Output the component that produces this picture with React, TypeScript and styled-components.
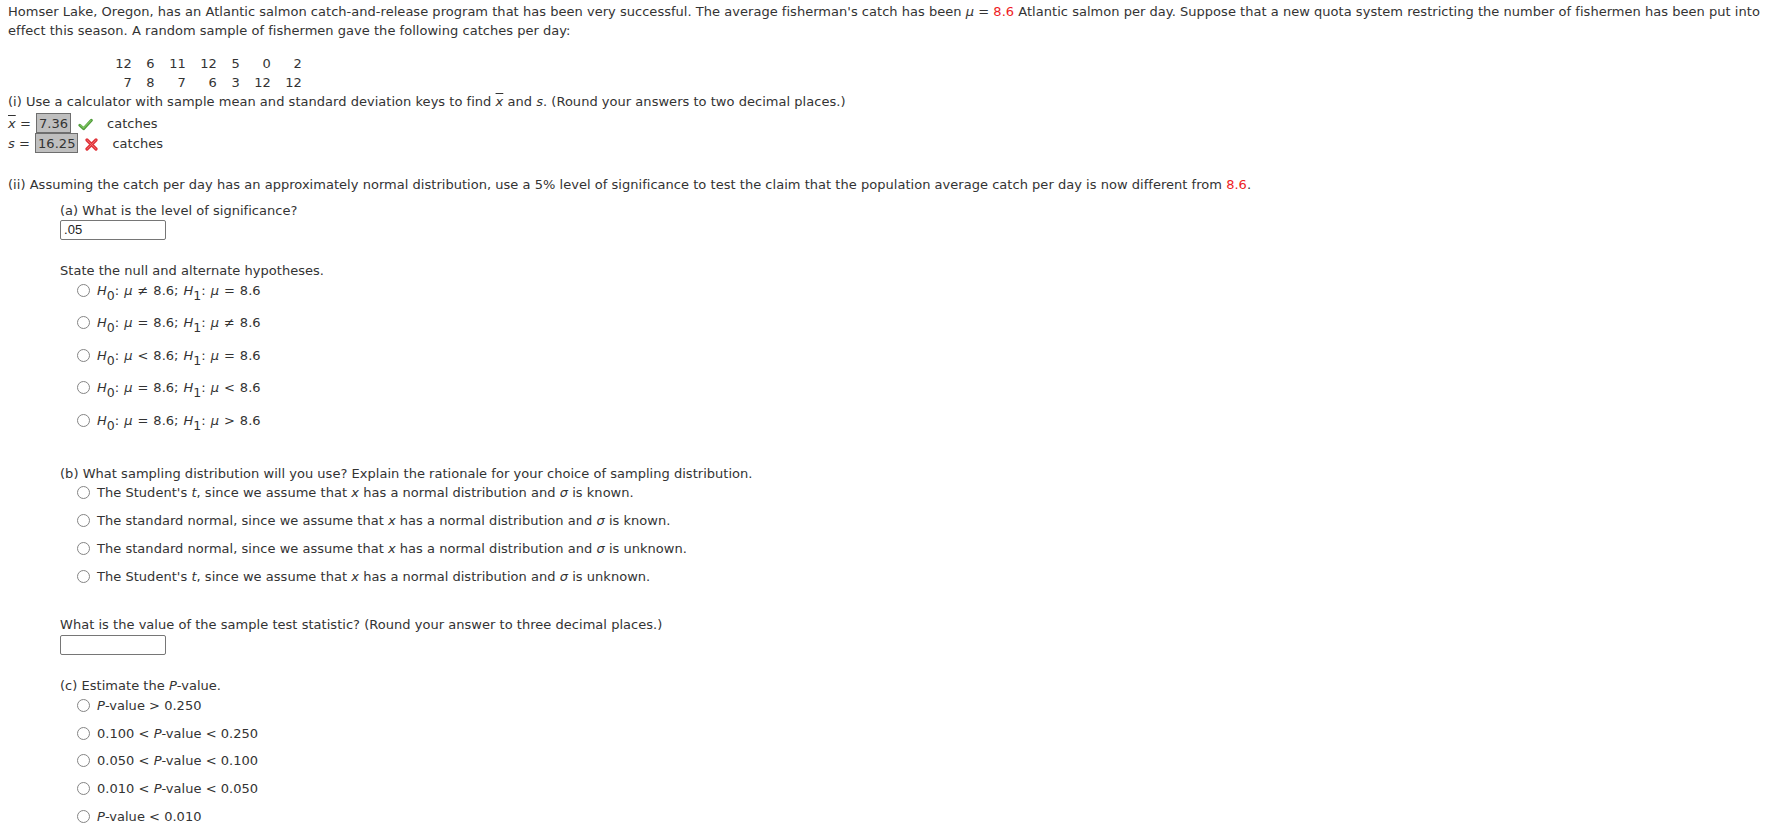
import styled, { createGlobalStyle } from 'styled-components';

const GlobalStyle = createGlobalStyle`
  html, body {
    margin: 0;
    background: #fff;
  }
  body {
    font-family: "DejaVu Sans", Verdana, sans-serif;
    font-size: 13px;
    letter-spacing: 0.03px;
    color: #333;
  }
`;

const Page = styled.div`
  padding: 2px 8px 0;
`;

const Para = styled.p<{ $top?: number }>`
  margin: ${({ $top }) => $top ?? 0}px 0 0;
  line-height: 19px;
`;

const Red = styled.span`
  color: #ee1c25;
`;

const Var = styled.i<{ $bar?: boolean }>`
  font-style: italic;
  text-decoration: ${({ $bar }) => ($bar ? 'overline' : 'none')};
`;

const Sub = styled.sub`
  font-size: 12.5px;
  vertical-align: -5px;
  line-height: 0;
`;

const DataTable = styled.table`
  margin: 14px 0 0 100px;
  border-collapse: collapse;

  td {
    padding: 0 7.25px;
    height: 19px;
    line-height: 19px;
    text-align: right;
  }
`;

const PartLine = styled.div`
  line-height: 20px;
`;

const AnswerRow = styled.div<{ $top?: number }>`
  display: flex;
  align-items: center;
  height: 20px;
  margin-top: ${({ $top }) => $top ?? 0}px;
  white-space: pre;
`;

const AnswerBox = styled.span`
  display: inline-flex;
  align-items: center;
  height: 20px;
  box-sizing: border-box;
  padding: 0 2px;
  margin-left: 1px;
  background: #bfbfbf;
  border: 1px solid #6e6e6e;
  color: #333;
`;

const Mark = styled.span`
  display: inline-flex;
  margin: 2px 14px 0 7px;

  svg {
    display: block;
  }
`;

const Indented = styled.div<{ $top?: number }>`
  margin: ${({ $top }) => $top ?? 0}px 0 0 52px;
`;

const TextInput = styled.div<{ $top?: number }>`
  width: 106px;
  height: 20px;
  box-sizing: border-box;
  margin-top: ${({ $top }) => $top ?? 0}px;
  padding: 0 3px;
  border: 1px solid #767676;
  border-radius: 2px;
  font-family: "Liberation Sans", Arial, sans-serif;
  font-size: 13px;
  line-height: 18px;
  color: #222;
`;

const RadioList = styled.div<{ $gap: number }>`
  display: flex;
  flex-direction: column;
  gap: ${({ $gap }) => $gap}px;
  margin-left: 17px;
`;

const RadioRow = styled.label<{ $math?: boolean }>`
  display: flex;
  align-items: center;
  gap: 7px;
  height: 20px;
  white-space: pre;
  word-spacing: ${({ $math }) => ($math ? '0.8px' : 'normal')};
`;

const Radio = styled.span`
  width: 13px;
  height: 13px;
  box-sizing: border-box;
  border: 1px solid #858585;
  border-radius: 50%;
  background: #fff;
  flex: none;
`;

const CheckIcon = () => (
  <svg width="15" height="13" viewBox="0 0 15 13">
    <path d="M1.8 7.2 L5.6 10.8 L13.4 2.2" fill="none" stroke="#4f9a3a" strokeWidth="2.8" strokeLinecap="round" strokeLinejoin="round" />
    <path d="M2.3 7 L5.6 10 L13 2.4" fill="none" stroke="#7cc35d" strokeWidth="1.2" strokeLinecap="round" strokeLinejoin="round" />
  </svg>
);

const CrossIcon = () => (
  <svg width="13" height="13" viewBox="0 0 13 13">
    <path d="M2 2 L11 11 M11 2 L2 11" fill="none" stroke="#e0343a" strokeWidth="3.2" strokeLinecap="round" />
    <path d="M2.4 2.4 L10.6 10.6 M10.6 2.4 L2.4 10.6" fill="none" stroke="#f0676b" strokeWidth="1" strokeLinecap="round" />
  </svg>
);

const H = ({ n }: { n: number }) => (
  <>
    <Var>H</Var>
    <Sub>{n}</Sub>
  </>
);

const Mu = () => <Var>μ</Var>;

const hypotheses: [string, string][] = [
  ['≠', '='],
  ['=', '≠'],
  ['<', '='],
  ['=', '<'],
  ['=', '>'],
];

const distributions: [string, string][] = [
  ["Student's", 'known'],
  ['standard normal', 'known'],
  ['standard normal', 'unknown'],
  ["Student's", 'unknown'],
];

const P = () => (
  <>
    <Var>P</Var>-value
  </>
);

const data = [
  ['12', '6', '11', '12', '5', '0', '2'],
  ['7', '8', '7', '6', '3', '12', '12'],
];

export default function App() {
  return (
    <Page>
      <GlobalStyle />
      <Para>
        Homser Lake, Oregon, has an Atlantic salmon catch-and-release program that has been very successful. The average
        fisherman's catch has been <Mu /> = <Red>8.6</Red> Atlantic salmon per day. Suppose that a new quota system
        restricting the number of fishermen has been put into effect this season. A random sample of fishermen gave the
        following catches per day:
      </Para>

      <DataTable>
        <tbody>
          {data.map((row, i) => (
            <tr key={i}>
              {row.map((v, j) => (
                <td key={j}>{v}</td>
              ))}
            </tr>
          ))}
        </tbody>
      </DataTable>

      <PartLine>
        (i) Use a calculator with sample mean and standard deviation keys to find <Var $bar>x</Var> and <Var>s</Var>.
        (Round your answers to two decimal places.)
      </PartLine>
      <AnswerRow $top={1}>
        <Var $bar>x</Var>
        {' = '}
        <AnswerBox>7.36</AnswerBox>
        <Mark>
          <CheckIcon />
        </Mark>
        catches
      </AnswerRow>
      <AnswerRow>
        <Var>s</Var>
        {' = '}
        <AnswerBox>16.25</AnswerBox>
        <Mark>
          <CrossIcon />
        </Mark>
        catches
      </AnswerRow>

      <Para $top={22}>
        (ii) Assuming the catch per day has an approximately normal distribution, use a 5% level of significance to test
        the claim that the population average catch per day is now different from <Red>8.6</Red>.
      </Para>

      <Indented $top={7}>
        <Para>(a) What is the level of significance?</Para>
        <TextInput>.05</TextInput>

        <Para $top={21}>State the null and alternate hypotheses.</Para>
        <RadioList $gap={12.65}>
          {hypotheses.map(([a, b], i) => (
            <RadioRow key={i} $math>
              <Radio />
              <span>
                <H n={0} />: <Mu /> {a} 8.6; <H n={1} />: <Mu /> {b} 8.6
              </span>
            </RadioRow>
          ))}
        </RadioList>

        <Para $top={33}>
          (b) What sampling distribution will you use? Explain the rationale for your choice of sampling distribution.
        </Para>
        <RadioList $gap={8.1}>
          {distributions.map(([name, known], i) => (
            <RadioRow key={i}>
              <Radio />
              <span>
                The {name}
                {name === "Student's" ? (
                  <>
                    {' '}
                    <Var>t</Var>
                  </>
                ) : null}
                , since we assume that <Var>x</Var> has a normal distribution and <Var>σ</Var> is {known}.
              </span>
            </RadioRow>
          ))}
        </RadioList>

        <Para $top={28}>What is the value of the sample test statistic? (Round your answer to three decimal places.)</Para>
        <TextInput $top={1} />

        <Para $top={21.5}>
          (c) Estimate the <Var>P</Var>-value.
        </Para>
        <RadioList $gap={7.75}>
          <RadioRow>
            <Radio />
            <span>
              <P /> &gt; 0.250
            </span>
          </RadioRow>
          <RadioRow>
            <Radio />
            <span>
              0.100 &lt; <P /> &lt; 0.250
            </span>
          </RadioRow>
          <RadioRow>
            <Radio />
            <span>
              0.050 &lt; <P /> &lt; 0.100
            </span>
          </RadioRow>
          <RadioRow>
            <Radio />
            <span>
              0.010 &lt; <P /> &lt; 0.050
            </span>
          </RadioRow>
          <RadioRow>
            <Radio />
            <span>
              <P /> &lt; 0.010
            </span>
          </RadioRow>
        </RadioList>
      </Indented>
    </Page>
  );
}
